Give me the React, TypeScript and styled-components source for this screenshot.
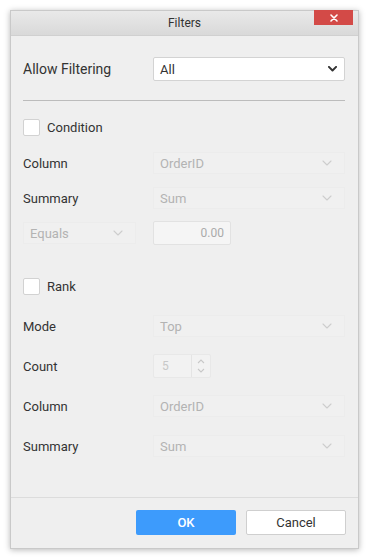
import React from 'react';
import styled, { createGlobalStyle } from 'styled-components';

const GlobalStyle = createGlobalStyle`
  html, body {
    margin: 0;
    padding: 0;
    background: #ffffff;
    font-family: Roboto, 'Liberation Sans', sans-serif;
  }
  * {
    box-sizing: border-box;
  }
`;

function Chevron({ color = '#cdcdcd', weight = 1.1, size = 10 }: { color?: string; weight?: number; size?: number }) {
  return (
    <svg width={size} height={size * 0.6} viewBox="0 0 10 6">
      <path d="M1 1 L5 5 L9 1" fill="none" stroke={color} strokeWidth={weight} strokeLinecap="round" strokeLinejoin="round" />
    </svg>
  );
}

function Select({ value, width = '192px' }: { value: string; width?: string }) {
  return (
    <DisabledSelect width={width}>
      <span>{value}</span>
      <Chevron />
    </DisabledSelect>
  );
}

function App() {
  return (
    <>
      <GlobalStyle />
      <Page>
        <Dialog>
          <TitleBar>
            Filters
            <CloseButton>
              <svg width="8" height="8" viewBox="0 0 8 8">
                <path d="M1 1 L7 7 M7 1 L1 7" stroke="#fff" strokeWidth="1.6" strokeLinecap="round" />
              </svg>
            </CloseButton>
          </TitleBar>
          <Body>
            <Row $top={21} $height={24}>
              <MainLabel>Allow Filtering</MainLabel>
              <ActiveSelect>
                <span>All</span>
                <Chevron color="#333" weight={2.2} size={9} />
              </ActiveSelect>
            </Row>
            <Divider />
            <Row $top={18} $height={17}>
              <CheckBox />
              <CheckLabel>Condition</CheckLabel>
            </Row>
            <Row $top={16} $height={22}>
              <Label>Column</Label>
              <Select value="OrderID" />
            </Row>
            <Row $top={13} $height={22}>
              <Label>Summary</Label>
              <Select value="Sum" />
            </Row>
            <Row $top={13} $height={22}>
              <Select value="Equals" width="113px" />
              <Spacer />
              <NumberBox width="78px">0.00</NumberBox>
            </Row>
            <Row $top={34} $height={17}>
              <CheckBox />
              <CheckLabel>Rank</CheckLabel>
            </Row>
            <Row $top={20} $height={22}>
              <Label>Mode</Label>
              <Select value="Top" />
            </Row>
            <Row $top={18} $height={22}>
              <Label>Count</Label>
              <SpinBox>
                <SpinValue>5</SpinValue>
                <SpinButtons>
                  <svg width="8" height="5" viewBox="0 0 8 5">
                    <path d="M1 4 L4 1 L7 4" fill="none" stroke="#c8c8c8" strokeWidth="1.1" />
                  </svg>
                  <svg width="8" height="5" viewBox="0 0 8 5">
                    <path d="M1 1 L4 4 L7 1" fill="none" stroke="#c8c8c8" strokeWidth="1.1" />
                  </svg>
                </SpinButtons>
              </SpinBox>
            </Row>
            <Row $top={18} $height={22}>
              <Label>Column</Label>
              <Select value="OrderID" />
            </Row>
            <Row $top={18} $height={22}>
              <Label>Summary</Label>
              <Select value="Sum" />
            </Row>
          </Body>
          <Footer>
            <OkButton>OK</OkButton>
            <CancelButton>Cancel</CancelButton>
          </Footer>
        </Dialog>
      </Page>
    </>
  );
}

export default App;

const Page = styled.div`
  width: 369px;
  height: 559px;
  padding: 10px 0 0 10px;
`;

const Dialog = styled.div`
  width: 349px;
  height: 539px;
  display: flex;
  flex-direction: column;
  background: #efefef;
  border: 1px solid #c9c9c9;
  box-shadow: 0 1px 6px rgba(0, 0, 0, 0.28);
`;

const TitleBar = styled.div`
  position: relative;
  height: 25px;
  flex-shrink: 0;
  display: flex;
  align-items: center;
  justify-content: center;
  font-size: 12px;
  color: #333;
  background: linear-gradient(#e9e9e9, #d9d9d9);
  border-bottom: 1px solid #d0d0d0;
`;

const CloseButton = styled.div`
  position: absolute;
  top: -1px;
  right: 5px;
  width: 39px;
  height: 15px;
  display: flex;
  align-items: center;
  justify-content: center;
  background: #d34a47;
`;

const Body = styled.div`
  flex: 1;
  padding: 0 13px 0 12px;
  display: flex;
  flex-direction: column;
`;

const Row = styled.div<{ $top: number; $height: number }>`
  margin-top: ${({ $top }) => $top}px;
  height: ${({ $height }) => $height}px;
  display: flex;
  align-items: center;
`;

const MainLabel = styled.div`
  width: 130px;
  font-size: 14px;
  color: #333;
`;

const Label = styled.div`
  width: 130px;
  font-size: 13px;
  color: #333;
`;

const Spacer = styled.div`
  width: 17px;
`;

const ActiveSelect = styled.div`
  width: 192px;
  height: 24px;
  display: flex;
  align-items: center;
  justify-content: space-between;
  padding: 0 7px 0 6px;
  background: #fff;
  border: 1px solid #d3d3d3;
  border-radius: 2px;
  font-size: 13px;
  color: #333;
`;

const DisabledSelect = styled.div<{ width: string }>`
  width: ${({ width }) => width};
  height: 22px;
  display: flex;
  align-items: center;
  justify-content: space-between;
  padding: 0 12px 0 6px;
  background: #f0f0f0;
  border: 1px solid #ececec;
  font-size: 13px;
  color: #b3b3b3;
`;

const NumberBox = styled.div<{ width: string }>`
  width: ${({ width }) => width};
  height: 24px;
  display: flex;
  align-items: center;
  justify-content: flex-end;
  padding-right: 6px;
  background: #f5f5f5;
  border: 1px solid #e2e2e2;
  border-radius: 2px;
  font-size: 12px;
  color: #aaa;
`;

const SpinBox = styled.div`
  width: 58px;
  height: 24px;
  display: flex;
  background: #f2f2f2;
  border: 1px solid #e8e8e8;
  border-radius: 2px;
`;

const SpinValue = styled.div`
  flex: 1;
  display: flex;
  align-items: center;
  padding-left: 8px;
  font-size: 12px;
  color: #c8c8c8;
`;

const SpinButtons = styled.div`
  width: 19px;
  display: flex;
  flex-direction: column;
  align-items: center;
  justify-content: center;
  gap: 4px;
  border-left: 1px solid #e4e4e4;
`;

const Divider = styled.div`
  margin-top: 19px;
  height: 1px;
  background: #bcbcbc;
`;

const CheckBox = styled.div`
  width: 17px;
  height: 17px;
  background: #fff;
  border: 1px solid #d2d2d2;
  border-radius: 2px;
`;

const CheckLabel = styled.div`
  margin-left: 7px;
  font-size: 13px;
  color: #333;
`;

const Footer = styled.div`
  height: 51px;
  flex-shrink: 0;
  display: flex;
  justify-content: flex-end;
  align-items: flex-start;
  gap: 10px;
  padding: 12px 12px 0 0;
  border-top: 1px solid #dcdcdc;
`;

const OkButton = styled.div`
  width: 100px;
  height: 25px;
  display: flex;
  align-items: center;
  justify-content: center;
  background: #3d9bfc;
  border-radius: 2px;
  color: #fff;
  font-size: 13px;
  font-weight: 500;
`;

const CancelButton = styled.div`
  width: 100px;
  height: 25px;
  display: flex;
  align-items: center;
  justify-content: center;
  background: #fff;
  border: 1px solid #cfcfcf;
  border-radius: 2px;
  color: #333;
  font-size: 13px;
`;
